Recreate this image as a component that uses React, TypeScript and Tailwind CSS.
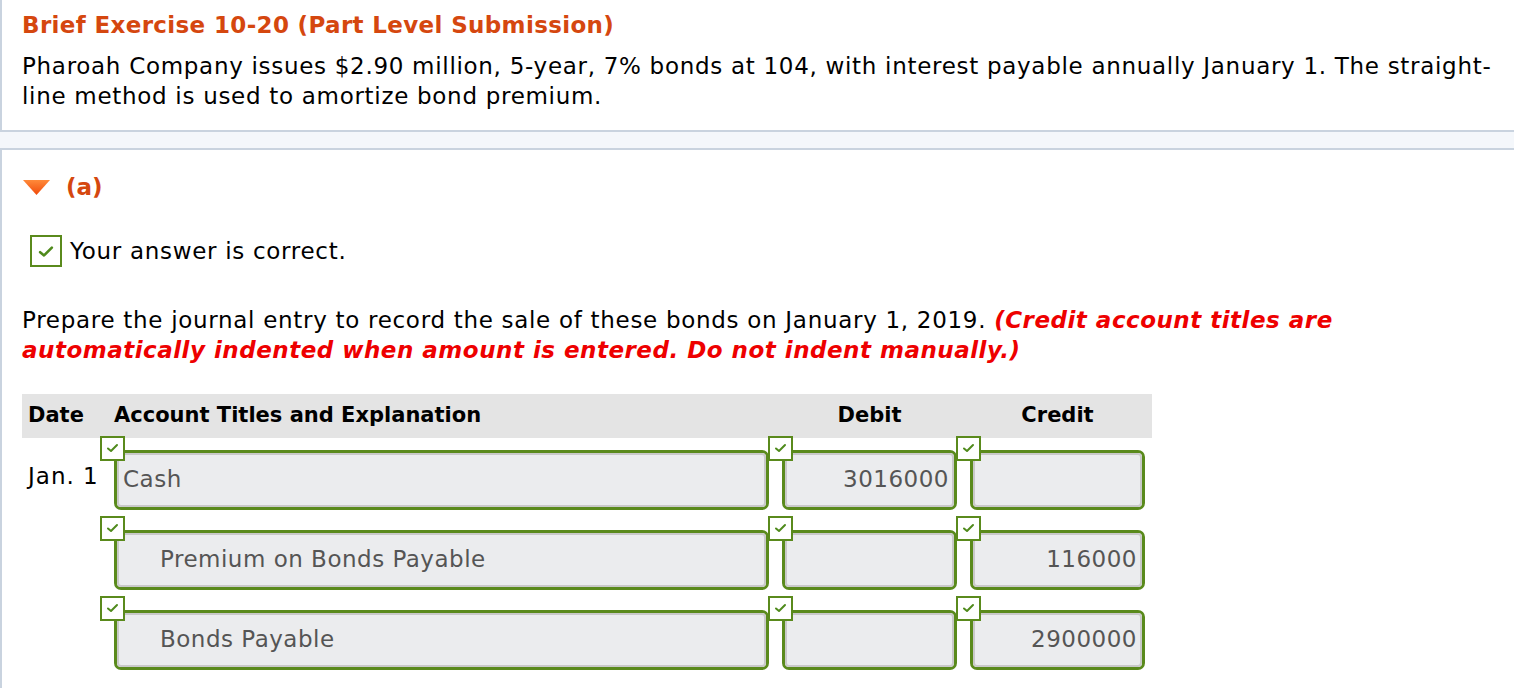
import React from "react";

const font = { fontFamily: '"DejaVu Sans", Verdana, sans-serif' };

function cn(...c: (string | false | undefined)[]) {
  return c.filter(Boolean).join(" ");
}

function Tick({ className }: { className?: string }) {
  return (
    <svg viewBox="0 0 12 10" className={className} fill="none">
      <polyline points="1.5,5.5 4.5,8 10.5,2" stroke="#4f8a1c" strokeWidth="2" strokeLinecap="round" strokeLinejoin="round" />
    </svg>
  );
}

function Badge() {
  return (
    <div className="absolute -left-[14px] -top-[14px] z-10 flex h-[25px] w-[25px] items-center justify-center border-2 border-[#5a8a1c] bg-white">
      <Tick className="h-[10px] w-[13px]" />
    </div>
  );
}

function Field({
  width,
  value,
  align = "left",
  indent = false,
}: {
  width: string;
  value: string;
  align?: "left" | "right";
  indent?: boolean;
}) {
  return (
    <div className={`relative h-[60px] ${width}`}>
      <Badge />
      <div className="h-full rounded-[7px] border-[3px] border-[#5a8a1c]">
        <div
          className={cn(
            "flex h-full items-center whitespace-nowrap rounded-[4px] border-2 border-[#c9c9c9] bg-[#ebecee] text-[23px] tracking-[0.5px] text-[#555]",
            align === "right" ? "justify-end pr-[3px]" : indent ? "pl-[41px]" : "pl-[4px]"
          )}
        >
          {value}
        </div>
      </div>
    </div>
  );
}

const rows = [
  { date: "Jan. 1", account: "Cash", indent: false, debit: "3016000", credit: "" },
  { date: "", account: "Premium on Bonds Payable", indent: true, debit: "", credit: "116000" },
  { date: "", account: "Bonds Payable", indent: true, debit: "", credit: "2900000" },
];

export default function App() {
  return (
    <div className="h-[688px] w-[1514px] overflow-hidden bg-white text-black" style={font}>
      {/* problem statement */}
      <div className="h-[132px] border-b-2 border-l-2 border-[#c9d3df] pl-[20px] pt-[10px]">
        <h1 className="whitespace-nowrap text-[23px] font-bold leading-[30px] tracking-[0.35px] text-[#d5470f]">
          Brief Exercise 10-20 (Part Level Submission)
        </h1>
        <p className="mt-[11px] whitespace-nowrap text-[23px] leading-[30px] tracking-[0.7px]">
          Pharoah Company issues $2.90 million, 5-year, 7% bonds at 104, with interest payable annually January 1. The straight-
          <br />
          line method is used to amortize bond premium.
        </p>
      </div>
      <div className="h-[16px] bg-[#f4f7fb]" />

      {/* part (a) */}
      <div className="h-[540px] border-l-2 border-t-2 border-[#c9d3df] pl-[20px]">
        <div className="mt-[22px] flex items-center gap-[16px]">
          <svg width="27" height="16" viewBox="0 0 27 16" className="ml-[1px]">
            <defs>
              <linearGradient id="tri" x1="0" y1="0" x2="0" y2="1">
                <stop offset="0" stopColor="#ff8a3a" />
                <stop offset="1" stopColor="#f04a0a" />
              </linearGradient>
            </defs>
            <polygon points="0,1 27,1 13.5,16" fill="url(#tri)" />
          </svg>
          <span className="text-[23px] font-bold leading-[30px] text-[#d5470f]">(a)</span>
        </div>

        <div className="mt-[32px] flex items-center gap-[8px] pl-[8px]">
          <div className="flex h-[32px] w-[32px] items-center justify-center border-2 border-[#5a8a1c] bg-white">
            <Tick className="h-[13px] w-[16px]" />
          </div>
          <span className="text-[23px] tracking-[0.7px]">Your answer is correct.</span>
        </div>

        <p className="mt-[36px] whitespace-nowrap text-[23px] leading-[30px] tracking-[0.7px]">
          Prepare the journal entry to record the sale of these bonds on January 1, 2019.{" "}
          <span className="font-bold italic tracking-[0.5px] text-[#ee0000]">
            (Credit account titles are
            <br />
            automatically indented when amount is entered. Do not indent manually.)
          </span>
        </p>

        {/* journal table */}
        <div className="mt-[29px] w-[1130px]">
          <div className="flex h-[44px] items-center bg-[#e4e4e4] text-[21px] font-bold">
            <div className="w-[92px] pl-[6px]">Date</div>
            <div className="w-[668px]">Account Titles and Explanation</div>
            <div className="w-[175px] text-center">Debit</div>
            <div className="ml-[13px] w-[175px] text-center">Credit</div>
          </div>
          <div className="mt-[12px] flex flex-col gap-[20px]">
            {rows.map((r, i) => (
              <div key={i} className="flex">
                <div className="w-[92px] whitespace-nowrap pl-[6px] pt-[11px] text-[23px] leading-[30px] tracking-[1px]">
                  {r.date}
                </div>
                <div className="flex gap-[13px]">
                  <Field width="w-[655px]" value={r.account} indent={r.indent} />
                  <Field width="w-[175px]" value={r.debit} align="right" />
                  <Field width="w-[175px]" value={r.credit} align="right" />
                </div>
              </div>
            ))}
          </div>
        </div>
      </div>
    </div>
  );
}
